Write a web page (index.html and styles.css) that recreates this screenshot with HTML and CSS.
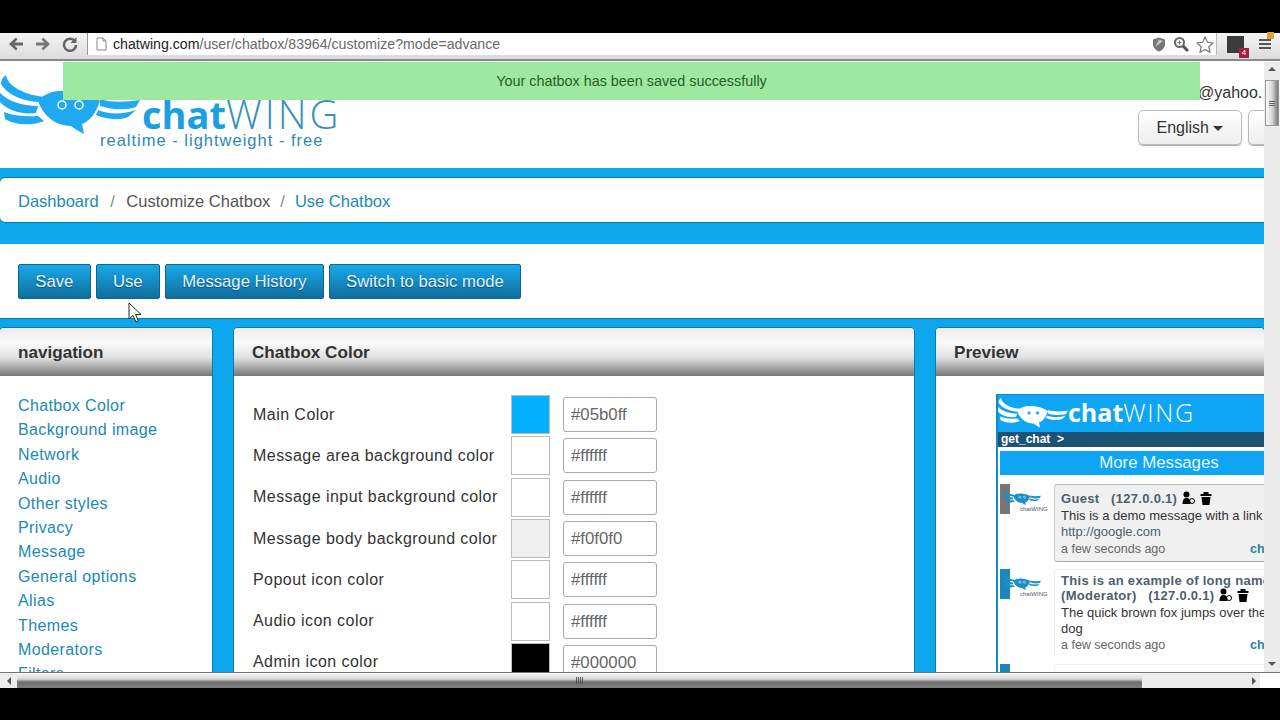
FILE: index.html
```html
<!DOCTYPE html>
<html>
<head>
    <meta charset="UTF-8" />
    <title>Customize Chatbox</title>
    <link rel="stylesheet" href="styles.css">
</head>
<body>

    <svg class="defs" width="0" height="0">
        <symbol id="bird" viewBox="0 0 140 62">
            <path d="M6 0C7 9 20 19 44 22L38 27C20 26 6 18 1 9C1 5 3 2 6 0Z" />
            <path d="M0 18C8 26 22 31 38 31L36 38C20 40 6 34 0 27Z" />
            <path d="M4 37C14 41 26 42 38 41L44 46C30 52 12 49 5 44Z" />
            <path d="M38 26C44 18 56 15 68 16C84 17 94 22 100 26C96 38 90 46 82 49L84 59C78 56 74 53 71 51C56 51 44 42 38 26Z" />
            <path d="M100 24C112 28 126 27 140 25L136 32C124 36 110 34 100 31Z" />
            <path d="M98 35C108 39 122 40 136 35L128 42C118 46 106 44 96 40Z" />
            <circle class="eye" cx="62" cy="30" r="4" />
            <circle class="eye" cx="79" cy="30" r="4" />
        </symbol>
    </svg>

    <div class="topblack"></div>

    <div class="toolbar">
        <svg class="navicon" width="18" height="16" viewBox="0 0 18 16"><path d="M16 6.500H7.500L10.500 3.500 9 1.500 2 8l7 6.500 1.500-2-3-3H16z" fill="#666"/></svg>
        <svg class="navicon" width="18" height="16" viewBox="0 0 18 16"><path d="M2 6.500h8.500L7.500 3.500 9 1.500 16 8l-7 6.500-1.500-2 3-3H2z" fill="#777"/></svg>
        <svg class="navicon" width="18" height="16" viewBox="0 0 18 16"><path d="M14 5.500A6 6 0 1 0 15 9" fill="none" stroke="#666" stroke-width="2.500"/><path d="M15.500 1v6h-6z" fill="#666"/></svg>
        <div class="urlbox">
            <svg width="11" height="14" viewBox="0 0 11 14"><path d="M1 1h6l3 3v9H1zM7 1v3h3" fill="#fff" stroke="#888"/></svg>
            <span class="url"><b>chatwing.com</b>/user/chatbox/83964/customize?mode=advance</span>
            <span class="urlicons">
                <svg width="16" height="17" viewBox="0 0 16 16"><path d="M8 1l6 2v5c0 3-3 6-6 7-3-1-6-4-6-7V3z" fill="#777"/><path d="M8 3l4 1.500-8 6z" fill="#c4c4c4"/></svg>
                <svg width="17" height="16" viewBox="0 0 17 16"><circle cx="6.500" cy="6.500" r="4.500" fill="#fff" stroke="#666" stroke-width="2"/><path d="M10 10l5 5" stroke="#555" stroke-width="3"/><path d="M4.500 6.500h4M6.500 4.500v4" stroke="#777"/></svg>
                <svg width="18" height="17" viewBox="0 0 18 17"><path d="M9 1l2.400 5.300 5.600.6-4.200 3.800 1.200 5.600L9 13.500l-5 2.800 1.200-5.600L1 6.900l5.600-.6z" fill="#fff" stroke="#777" stroke-width="1.200"/></svg>
            </span>
        </div>
        <div class="extarea">
            <span class="ext"><span class="extbadge">4</span></span>
            <span class="menu"><i></i><i></i><i></i><span class="menubadge"></span></span>
        </div>
    </div>

    <div class="viewport">
        <div class="hscrollrow">
            <div class="page">

                <div class="header">
                    <div class="logo">
                        <div class="brand">
                            <svg class="birdlogo" width="140" height="62"><use href="#bird"/></svg>
                            <span class="brandtext"><b>chat</b><span class="wing">WING</span></span>
                        </div>
                        <div class="tagline">realtime - lightweight - free</div>
                    </div>
                    <div class="account">
                        <div class="email">@yahoo.</div>
                        <div class="langrow">
                            <button type="button" class="langbtn">English <span class="caret"></span></button>
                            <button type="button" class="langbtn"></button>
                        </div>
                    </div>
                </div>

                <div class="crumbwrap">
                    <div class="crumbs">
                        <a>Dashboard</a><span class="sep">/</span><span class="cur">Customize Chatbox</span><span class="sep">/</span><a>Use Chatbox</a>
                    </div>
                </div>

                <div class="actionswrap">
                    <div class="actions">
                        <button type="button" class="bluebtn">Save</button>
                        <button type="button" class="bluebtn">Use</button>
                        <button type="button" class="bluebtn">Message History</button>
                        <button type="button" class="bluebtn">Switch to basic mode</button>
                    </div>
                </div>

                <div class="columns">
                    <div class="panel nav">
                        <div class="panelhead">navigation</div>
                        <div class="navlist">
                            <a>Chatbox Color</a>
                            <a>Background image</a>
                            <a>Network</a>
                            <a>Audio</a>
                            <a>Other styles</a>
                            <a>Privacy</a>
                            <a>Message</a>
                            <a>General options</a>
                            <a>Alias</a>
                            <a>Themes</a>
                            <a>Moderators</a>
                            <a>Filters</a>
                        </div>
                    </div>

                    <div class="panel main">
                        <div class="panelhead">Chatbox Color</div>
                        <div class="colorlist">
                            <div class="colorrow"><span class="colorname">Main Color</span><span class="swatch" style="background:#05b0ff"></span><span class="hexinput">#05b0ff</span></div>
                            <div class="colorrow"><span class="colorname">Message area background color</span><span class="swatch" style="background:#ffffff"></span><span class="hexinput">#ffffff</span></div>
                            <div class="colorrow"><span class="colorname">Message input background color</span><span class="swatch" style="background:#ffffff"></span><span class="hexinput">#ffffff</span></div>
                            <div class="colorrow"><span class="colorname">Message body background color</span><span class="swatch" style="background:#f0f0f0"></span><span class="hexinput">#f0f0f0</span></div>
                            <div class="colorrow"><span class="colorname">Popout icon color</span><span class="swatch" style="background:#ffffff"></span><span class="hexinput">#ffffff</span></div>
                            <div class="colorrow"><span class="colorname">Audio icon color</span><span class="swatch" style="background:#ffffff"></span><span class="hexinput">#ffffff</span></div>
                            <div class="colorrow"><span class="colorname">Admin icon color</span><span class="swatch" style="background:#000000"></span><span class="hexinput">#000000</span></div>
                        </div>
                    </div>

                    <div class="panel preview">
                        <div class="panelhead">Preview</div>
                        <div class="previewbody">
                            <div class="chatbox">
                                <div class="chatlogo">
                                    <svg class="birdwhite" width="70" height="31"><use href="#bird"/></svg>
                                    <span class="chatlogotext"><b>chat</b><span class="wingsmall">WING</span></span>
                                </div>
                                <div class="chatname">get_chat &nbsp;&gt;</div>
                                <div class="more">More Messages</div>

                                <div class="msg">
                                    <div class="avatar grey"><svg class="birdsmall" width="38" height="17"><use href="#bird"/></svg><span class="tinylogo">chatWING</span></div>
                                    <div class="bubble shaded">
                                        <div class="who">Guest &nbsp; (127.0.0.1) <svg class="tool" width="31" height="14" viewBox="0 0 30 14"><circle cx="5" cy="3.500" r="3"/><path d="M1 13c0-5 2-6 4-6s4 1 4 6z"/><circle cx="10.500" cy="10" r="2.500" fill="none" stroke="#000"/><path d="M19 3h11v2H19zM22 1h5v2h-5zM20 6h9l-1 8h-7z"/></svg></div>
                                        <div class="text">This is a demo message with a link<br><span class="link">http://google.com</span></div>
                                        <div class="foot"><span>a few seconds ago</span><b>chat</b></div>
                                    </div>
                                </div>

                                <div class="msg">
                                    <div class="avatar blue"><svg class="birdsmall" width="38" height="17"><use href="#bird"/></svg><span class="tinylogo">chatWING</span></div>
                                    <div class="bubble">
                                        <div class="who">This is an example of long name</div>
                                        <div class="who">(Moderator) &nbsp; (127.0.0.1) <svg class="tool" width="31" height="14" viewBox="0 0 30 14"><circle cx="5" cy="3.500" r="3"/><path d="M1 13c0-5 2-6 4-6s4 1 4 6z"/><circle cx="10.500" cy="10" r="2.500" fill="none" stroke="#000"/><path d="M19 3h11v2H19zM22 1h5v2h-5zM20 6h9l-1 8h-7z"/></svg></div>
                                        <div class="text">The quick brown fox jumps over the<br>dog</div>
                                        <div class="foot"><span>a few seconds ago</span><b>chat</b></div>
                                    </div>
                                </div>

                                <div class="msg">
                                    <div class="avatar blue"></div>
                                    <div class="bubble"></div>
                                </div>
                            </div>
                        </div>
                    </div>
                </div>

            </div>

            <div class="vscroll">
                <span class="arrow up"></span>
                <div class="vthumb"><i></i><i></i><i></i></div>
                <div class="spacer"></div>
                <span class="arrow down"></span>
            </div>

            <div class="notice">Your chatbox has been saved successfully</div>

            <svg class="cursor" width="14" height="22" viewBox="0 0 14 22"><path d="M1 1v16l4-3.500 3 6.500 2.500-1-3-6.500H13z" fill="#fff" stroke="#222"/></svg>
        </div>

        <div class="hscroll">
            <span class="harrowbox"><span class="arrow left"></span></span>
            <div class="hthumb"><span class="grip"></span></div>
            <div class="spacer"></div>
            <span class="arrow right"></span>
            <span class="corner"></span>
        </div>
    </div>

    <div class="botblack"></div>

</body>
</html>
```

FILE: styles.css
```css
body {
    margin: 0;
    width: 1280px;
    height: 720px;
    overflow: hidden;
    background-color: #000;
    font-family: "Liberation Sans", Arial, sans-serif;
    color: #333;
}

.defs {
    display: block;
    height: 0;
}

.topblack {
    height: 33px;
}

.botblack {
    height: 32px;
}

/* browser chrome */
.toolbar {
    height: 22px;
    display: flex;
    align-items: center;
    padding: 0 0 4px 7px;
    background: linear-gradient(#f4f4f4, #dcdcdc);
    border-bottom: 2px solid #8a8a8a;
}

.navicon {
    margin-right: 9px;
    flex: none;
}

.urlbox {
    width: 1130px;
    height: 22px;
    margin-left: -1px;
    flex: none;
    display: flex;
    align-items: center;
    padding-left: 8px;
    box-sizing: border-box;
    background-color: #fff;
    border-left: 1px solid #999;
    border-right: 1px solid #bbb;
}

.url {
    margin-left: 6px;
    font-size: 14.150px;
    color: #6a6a6a;
}

.url b {
    font-weight: normal;
    color: #222;
}

.urlicons {
    margin-left: auto;
    display: flex;
    align-items: center;
    gap: 6px;
    padding-right: 2px;
}

.extarea {
    display: flex;
    align-items: center;
    margin-left: 10px;
    gap: 15px;
}

.ext {
    position: relative;
    width: 17px;
    height: 17px;
    background-color: #3b3b3b;
}

.extbadge {
    position: absolute;
    right: -5px;
    bottom: -5px;
    width: 10px;
    height: 10px;
    background-color: #a5213f;
    color: #fff;
    font-size: 8px;
    line-height: 10px;
    text-align: center;
}

.menu {
    position: relative;
    display: flex;
    flex-direction: column;
    gap: 2px;
    width: 12px;
}

.menu i {
    height: 2px;
    background-color: #555;
}

.menubadge {
    position: absolute;
    top: -7px;
    right: -3px;
    width: 7px;
    height: 7px;
    background-color: #e0a030;
}

/* page */
.viewport {
    height: 627px;
    display: flex;
    flex-direction: column;
    background-color: #fff;
}

.hscrollrow {
    position: relative;
    flex: none;
    height: 610px;
    margin-top: 1px;
    display: flex;
    overflow: hidden;
}

.page {
    width: 1264px;
    flex: none;
    overflow: hidden;
    background-color: #fff;
}

.notice {
    position: absolute;
    left: 63px;
    top: 0;
    width: 1137px;
    height: 38px;
    line-height: 38px;
    text-align: center;
    font-size: 14.400px;
    color: #246324;
    background-color: #9fe89f;
}

.cursor {
    position: absolute;
    left: 128px;
    top: 240px;
}

.header {
    height: 106px;
    box-sizing: border-box;
    display: flex;
    justify-content: space-between;
    padding-top: 13px;
}

.brand {
    display: flex;
    align-items: flex-end;
    height: 62px;
}

.birdlogo {
    fill: #1fa9f0;
    flex: none;
}

.eye {
    stroke: #fff;
    stroke-width: 1.500;
    fill: #1fa9f0;
}

.brandtext {
    margin-left: 2px;
    font-family: "Open Sans", sans-serif;
    font-size: 38px;
    line-height: 46px;
}

.brandtext b {
    font-weight: 700;
    color: #1b9fe0;
}

.wing {
    font-weight: 300;
    font-size: 40px;
    letter-spacing: 3px;
    color: #3a8fb8;
}

.tagline {
    margin: -6px 0 0 100px;
    font-size: 16.500px;
    letter-spacing: 1px;
    line-height: 18px;
    color: #2f88b4;
}

.account {
    width: 126px;
    overflow: hidden;
    flex: none;
}

.email {
    white-space: nowrap;
    font-size: 16px;
    line-height: 20px;
    margin-top: 8px;
    padding-left: 60px;
}

.langrow {
    display: flex;
    gap: 6px;
    width: 240px;
    margin-top: 7px;
}

.langbtn {
    width: 104px;
    height: 35px;
    flex: none;
    padding: 0;
    font-family: inherit;
    font-size: 16px;
    color: #333;
    background: linear-gradient(#fff, #eee);
    border: 1px solid #bbb;
    border-radius: 5px;
    box-shadow: 0 1px 1px #aaa;
}

.caret {
    display: inline-block;
    vertical-align: middle;
    border: 5px solid transparent;
    border-top-color: #333;
    border-bottom: 0;
}

.crumbwrap {
    height: 76px;
    box-sizing: border-box;
    padding: 10px 0 22px;
    background-color: #0ea6ec;
}

.crumbs {
    height: 44px;
    line-height: 46px;
    padding-left: 18px;
    background-color: #fff;
    border-top-left-radius: 5px;
    border-bottom-left-radius: 5px;
    box-shadow: 0 -1px 0 #0a7aab, 0 1px 0 #0a7aab;
    font-size: 16.500px;
}

.crumbs a, .navlist a {
    color: #2089b5;
}

.sep {
    margin: 0 11.500px;
    color: #888;
}

.cur + .sep {
    margin: 0 10px;
}

.cur {
    color: #555;
}

.actionswrap {
    height: 74px;
}

.actions {
    display: flex;
    gap: 5px;
    padding: 20px 0 0 18px;
}

.bluebtn {
    height: 35px;
    padding: 0 16.300px;
    font-family: inherit;
    font-size: 16.700px;
    color: #e4f3fb;
    text-shadow: 0 1px 1px #0b4f70;
    background: linear-gradient(#1aa8e8, #0f6f9e);
    border: 1px solid #0d6690;
    border-radius: 2px;
}

.columns {
    display: flex;
    gap: 22px;
    height: 354px;
    padding-top: 9px;
    background-color: #0ea6ec;
    border-top: 1px solid #0a7aab;
}

.panel {
    background-color: #fff;
    overflow: hidden;
    border-top-left-radius: 4px;
    border-top-right-radius: 4px;
    box-shadow: 0 0 0 1px #0b7aae;
}

.nav {
    width: 212px;
    flex: none;
}

.main {
    width: 680px;
    flex: none;
}

.preview {
    flex: 1;
}

.panelhead {
    height: 48px;
    line-height: 50px;
    padding-left: 18px;
    font-size: 17.100px;
    font-weight: bold;
    color: #333;
    background: linear-gradient(#ececec 0, #fafafa 30%, #e0e0e0 62%, #767676 100%);
}

.navlist {
    padding: 18px 0 0 18px;
}

.navlist a {
    display: block;
    font-size: 16px;
    letter-spacing: 0.370px;
    line-height: 24.400px;
}

.colorlist {
    padding: 18px 0 0 19px;
}

.colorrow {
    display: flex;
    align-items: center;
    height: 41.300px;
}

.colorname {
    width: 258px;
    font-size: 16px;
    letter-spacing: 0.450px;
    color: #333;
}

.swatch {
    width: 37px;
    height: 37px;
    flex: none;
    border: 1px solid #bbb;
}

.hexinput {
    width: 94px;
    height: 35px;
    margin-left: 13px;
    box-sizing: border-box;
    padding-left: 7px;
    line-height: 33px;
    font-size: 16.800px;
    color: #666;
    background-color: #fff;
    border: 1px solid #aaa;
    border-radius: 3px;
}

.previewbody {
    padding: 18px 0 0 60px;
}

.chatbox {
    height: 300px;
    overflow: hidden;
    background-color: #fff;
    border-left: 2px solid #0e8cc6;
    border-top: 1px solid #0e8cc6;
}

.chatlogo {
    height: 37px;
    display: flex;
    align-items: center;
    background-color: #0ea6f4;
}

.birdwhite {
    fill: #fff;
    flex: none;
}

.birdwhite .eye {
    fill: #fff;
}

.chatlogotext {
    font-family: "Open Sans", sans-serif;
    font-size: 25px;
    color: #fff;
    margin-top: -3px;
}

.chatlogotext b {
    font-weight: 700;
}

.wingsmall {
    font-weight: 300;
    letter-spacing: 1.700px;
}

.chatname {
    height: 15px;
    line-height: 15px;
    padding-left: 3px;
    font-size: 12px;
    font-weight: bold;
    color: #fff;
    background-color: #1c5272;
}

.more {
    width: 318px;
    height: 24px;
    line-height: 24px;
    margin: 4px 0 9px 2px;
    text-align: center;
    font-size: 16.800px;
    color: #e6f6ff;
    background-color: #0ea6f4;
}

.msg {
    display: flex;
    margin-bottom: 7px;
    padding-left: 2px;
}

.avatar {
    width: 54px;
    flex: none;
    position: relative;
}

.avatar::before {
    content: "";
    position: absolute;
    left: 0;
    top: 0;
    width: 10px;
    height: 30px;
}

.grey::before {
    background-color: #777;
}

.blue::before {
    background-color: #1c86b8;
}

.birdsmall {
    position: relative;
    display: block;
    margin: 5px 0 0 3px;
    fill: #1a8fc8;
}

.birdsmall .eye {
    fill: #1a8fc8;
}

.tinylogo {
    position: relative;
    display: block;
    margin-left: 20px;
    font-size: 6px;
    line-height: 7px;
    color: #557;
}

.bubble {
    width: 210px;
    flex: none;
    padding: 4px 0 0 6px;
    box-sizing: border-box;
    background-color: #fff;
    border-top: 1px solid #eee;
    border-left: 1px solid #eee;
    border-radius: 3px 0 0 3px;
    min-height: 88px;
    overflow: hidden;
}

.shaded {
    min-height: 78px;
    padding-top: 6px;
    background-color: #f0f0f0;
    border-top: 1px solid #bbb;
    border-left: 1px solid #ccc;
    border-bottom: 1px solid #aaa;
}

.who {
    font-size: 13px;
    line-height: 14px;
    font-weight: bold;
    letter-spacing: 0.300px;
    color: #4d6070;
    white-space: nowrap;
}

.tool {
    vertical-align: -2px;
}

.text {
    margin-top: 2px;
    font-size: 13px;
    line-height: 15.500px;
    white-space: nowrap;
    color: #333;
}

.link {
    color: #4d6070;
    font-size: 13px;
}

.foot {
    display: flex;
    justify-content: space-between;
    margin-top: 2px;
    font-size: 12.500px;
    line-height: 15px;
    color: #666;
    white-space: nowrap;
}

.shaded .foot {
    margin-top: 3px;
}

.foot b {
    width: 14px;
    overflow: hidden;
    color: #2a7fa8;
}

/* scrollbars */
.vscroll {
    flex: 1;
    display: flex;
    flex-direction: column;
    align-items: center;
    background-color: #ececec;
    padding: 0 0 6px;
}

.spacer {
    flex: 1;
}

.arrow {
    width: 0;
    height: 0;
    border: 4px solid transparent;
    flex: none;
}

.arrow.up {
    margin-top: 5px;
    border-top: 0;
    border-bottom-color: #555;
}

.arrow.down {
    border-bottom: 0;
    border-top-color: #555;
}

.arrow.left {
    display: block;
    border-left: 0;
    border-right-color: #555;
}

.arrow.right {
    margin-right: 4px;
    border-right: 0;
    border-left-color: #555;
}

.vthumb {
    width: 14px;
    height: 46px;
    margin-top: 9px;
    display: flex;
    flex-direction: column;
    justify-content: center;
    align-items: center;
    gap: 1px;
    background: linear-gradient(90deg, #fafafa, #d8d8d8 50%, #777);
    border: 1px solid #999;
    box-sizing: border-box;
}

.vthumb i {
    width: 6px;
    height: 1px;
    background-color: #666;
}

.hscroll {
    flex: none;
    height: 16px;
    display: flex;
    align-items: center;
    background-color: #ececec;
    border-top: 1px solid #777;
    box-sizing: border-box;
}

.harrowbox {
    width: 17px;
    flex: none;
    display: flex;
    justify-content: center;
}

.hthumb {
    width: 1125px;
    height: 15px;
    flex: none;
    display: flex;
    justify-content: center;
    align-items: center;
    background: linear-gradient(#f8f8f8, #d8d8d8 40%, #6f6f6f 60%, #7d7d7d);
}

.grip {
    width: 8px;
    height: 7px;
    background: repeating-linear-gradient(90deg, #555 0, #555 1px, transparent 1px, transparent 2px);
}

.corner {
    width: 20px;
    height: 15px;
    flex: none;
    background-color: #fff;
}
```
